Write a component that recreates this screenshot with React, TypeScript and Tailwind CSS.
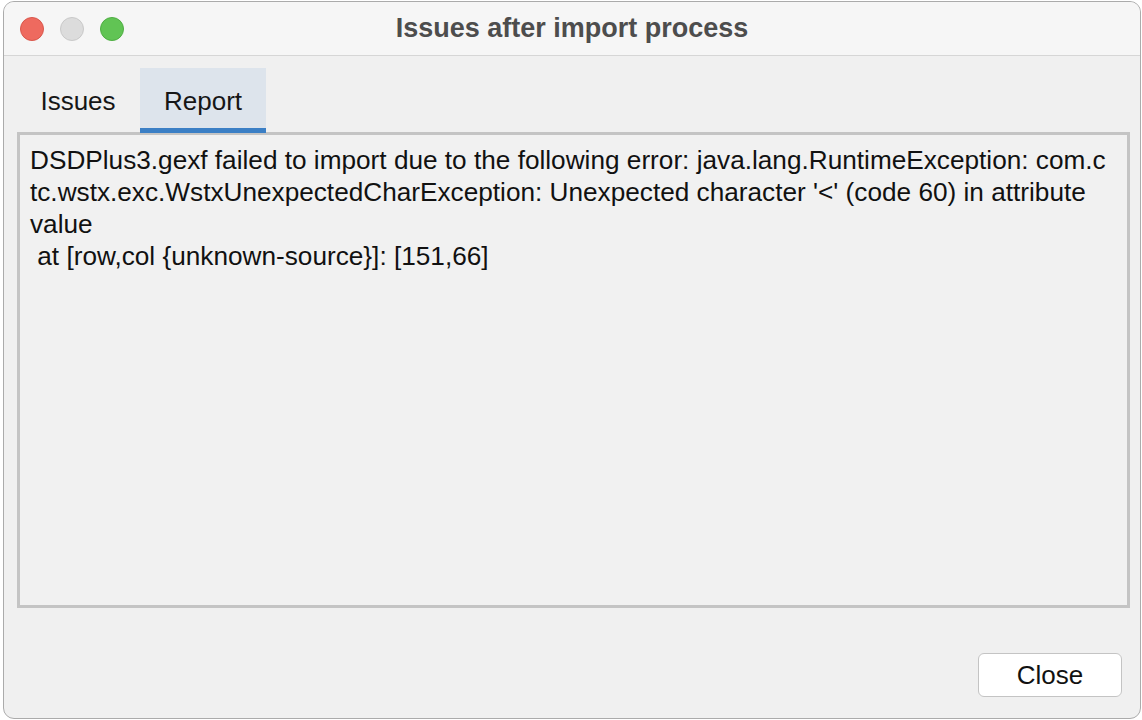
import React from "react";

const font = { fontFamily: '"Liberation Sans", Arial, Helvetica, sans-serif' };

export default function App() {
  return (
    <div className="w-[1142px] h-[720px] bg-white overflow-hidden" style={font}>
      <div className="ml-[3px] mt-[1px] w-[1138px] h-[718px] rounded-[11px] border border-[#ababab] overflow-hidden flex flex-col bg-[#f0f0f0]">
        {/* Title bar */}
        <div className="h-[54px] shrink-0 bg-[#f6f6f6] border-b border-[#d6d6d6] grid grid-cols-[1fr_auto_1fr] items-center">
          <div className="flex items-center gap-[16px] pl-[16px]">
            <span className="w-[24px] h-[24px] rounded-full bg-[#ee6a5f] border border-[#d9574c]" />
            <span className="w-[24px] h-[24px] rounded-full bg-[#dcdcdc] border border-[#c9c9c9]" />
            <span className="w-[24px] h-[24px] rounded-full bg-[#61c454] border border-[#4fae43]" />
          </div>
          <div className="text-[27px] font-bold text-[#4d4d4d] leading-none">Issues after import process</div>
          <div />
        </div>

        {/* Body */}
        <div className="flex-1 flex flex-col">
          <div className="relative z-10 flex mt-[12px] pl-[12px] h-[65px] text-[26px] text-[#161616]">
            <div className="w-[124px] flex items-center justify-center pt-[2px]">Issues</div>
            <div className="w-[126px] flex items-center justify-center pt-[6px] bg-[#dde4ec] border-b-[5px] border-[#3b7fc5]">Report</div>
          </div>
          <div className="-mt-[1px] ml-[13px] w-[1113px] h-[476px] border-[3px] border-[#c4c4c4] bg-[#f1f1f1] pt-[9px] pl-[10px] text-[26.2px] leading-[32px] text-[#111] whitespace-pre">
            <div>DSDPlus3.gexf failed to import due to the following error: java.lang.RuntimeException: com.c</div>
            <div>tc.wstx.exc.WstxUnexpectedCharException: Unexpected character '&lt;' (code 60) in attribute</div>
            <div>value</div>
            <div> at [row,col {"{"}unknown-source{"}"}]: [151,66]</div>
          </div>
          <div className="flex justify-end pr-[18px] mt-[45px]">
            <button className="w-[144px] h-[44px] rounded-[6px] border border-[#c4c4c4] bg-white text-[26px] text-[#111] flex items-center justify-center">
              Close
            </button>
          </div>
        </div>
      </div>
    </div>
  );
}
